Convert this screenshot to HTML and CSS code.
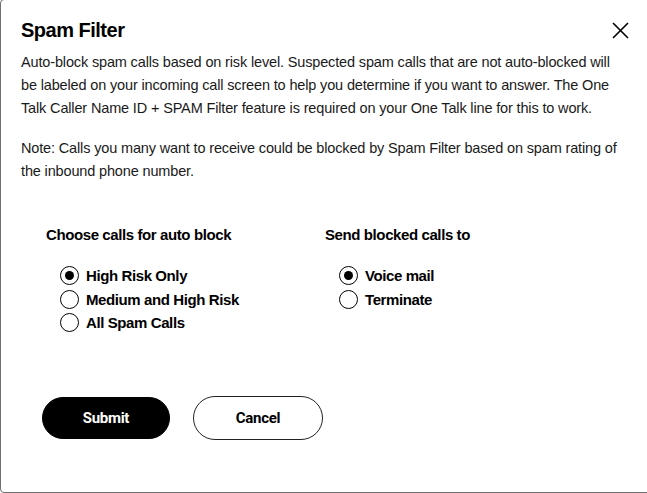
FILE: index.html
```html
<!DOCTYPE html>
<html>
<head>
<meta charset="utf-8">
<link rel="stylesheet" href="styles.css">
</head>
<body>
<div class="dialog">
  <div class="header">
    <h1 class="title">Spam Filter</h1>
    <button class="close" aria-label="Close">
      <svg width="17" height="17" viewBox="0 0 17 17"><path d="M1 1 L16 16 M16 1 L1 16" stroke="#000" stroke-width="1.6" fill="none"/></svg>
    </button>
  </div>
  <p class="text">Auto-block spam calls based on risk level. Suspected spam calls that are not auto-blocked will be labeled on your incoming call screen to help you determine if you want to answer. The One Talk Caller Name ID + SPAM Filter feature is required on your One Talk line for this to work.</p>
  <p class="text note">Note: Calls you many want to receive could be blocked by Spam Filter based on spam rating of the inbound phone number.</p>
  <div class="options">
    <div class="group group-left">
      <div class="group-title">Choose calls for auto block</div>
      <div class="radios">
        <label class="radio"><span class="dot checked"></span>High Risk Only</label>
        <label class="radio"><span class="dot"></span>Medium and High Risk</label>
        <label class="radio"><span class="dot"></span>All Spam Calls</label>
      </div>
    </div>
    <div class="group">
      <div class="group-title">Send blocked calls to</div>
      <div class="radios">
        <label class="radio"><span class="dot checked"></span>Voice mail</label>
        <label class="radio"><span class="dot"></span>Terminate</label>
      </div>
    </div>
  </div>
  <div class="actions">
    <button class="btn btn-primary">Submit</button>
    <button class="btn btn-secondary">Cancel</button>
  </div>
</div>
</body>
</html>
```
FILE: styles.css
```css
html, body {
  margin: 0;
  padding: 0;
  background: #fff;
  overflow: hidden;
}
body {
  font-family: "Liberation Sans", Arial, sans-serif;
  color: #000;
}
.dialog {
  box-sizing: border-box;
  width: 651px;
  height: 494px;
  margin-top: -1px;
  border: 1px solid #6f6f6f;
  border-radius: 4px;
  padding: 0 3px 0 20px;
  background: #fff;
}
.header {
  display: flex;
  justify-content: space-between;
  align-items: center;
  padding-top: 16px;
  padding-right: 18px;
}
.title {
  margin: 0;
  font-size: 20px;
  font-weight: bold;
  letter-spacing: -0.5px;
  line-height: 28px;
}
.close {
  border: 0;
  background: none;
  padding: 0;
  width: 17px;
  height: 17px;
  display: flex;
  cursor: pointer;
}
.text {
  margin: 7px 0 0 0;
  padding-right: 21px;
  font-size: 14.5px;
  line-height: 23px;
  letter-spacing: -0.15px;
  color: #1a1a1a;
}
.note {
  margin-top: 17px;
}
.options {
  display: flex;
  padding-left: 25px;
  margin-top: 42px;
}
.group-left {
  width: 279px;
}
.group-title {
  font-size: 15px;
  font-weight: bold;
  letter-spacing: -0.4px;
  line-height: 20px;
}
.radios {
  display: flex;
  flex-direction: column;
  gap: 4.5px;
  padding-left: 14px;
  margin-top: 21px;
}
.radio {
  display: flex;
  align-items: center;
  gap: 7px;
  font-size: 15px;
  font-weight: bold;
  letter-spacing: -0.4px;
  line-height: 19px;
}
.dot {
  box-sizing: border-box;
  width: 19px;
  height: 19px;
  border: 1.2px solid #000;
  border-radius: 50%;
  display: flex;
  align-items: center;
  justify-content: center;
}
.dot.checked::after {
  content: "";
  width: 9px;
  height: 9px;
  border-radius: 50%;
  background: #000;
}
.actions {
  display: flex;
  align-items: center;
  gap: 23px;
  padding-left: 21px;
  margin-top: 64px;
}
.btn {
  font-family: Roboto, "Liberation Sans", sans-serif;
  font-size: 15px;
  font-weight: bold;
  letter-spacing: -0.3px;
  border-radius: 22px;
  cursor: pointer;
}
.btn-primary {
  width: 128px;
  height: 42px;
  background: #000;
  color: #fff;
  border: 1px solid #000;
}
.btn-secondary {
  width: 130px;
  height: 44px;
  background: #fff;
  color: #000;
  border: 1px solid #222;
}
```
